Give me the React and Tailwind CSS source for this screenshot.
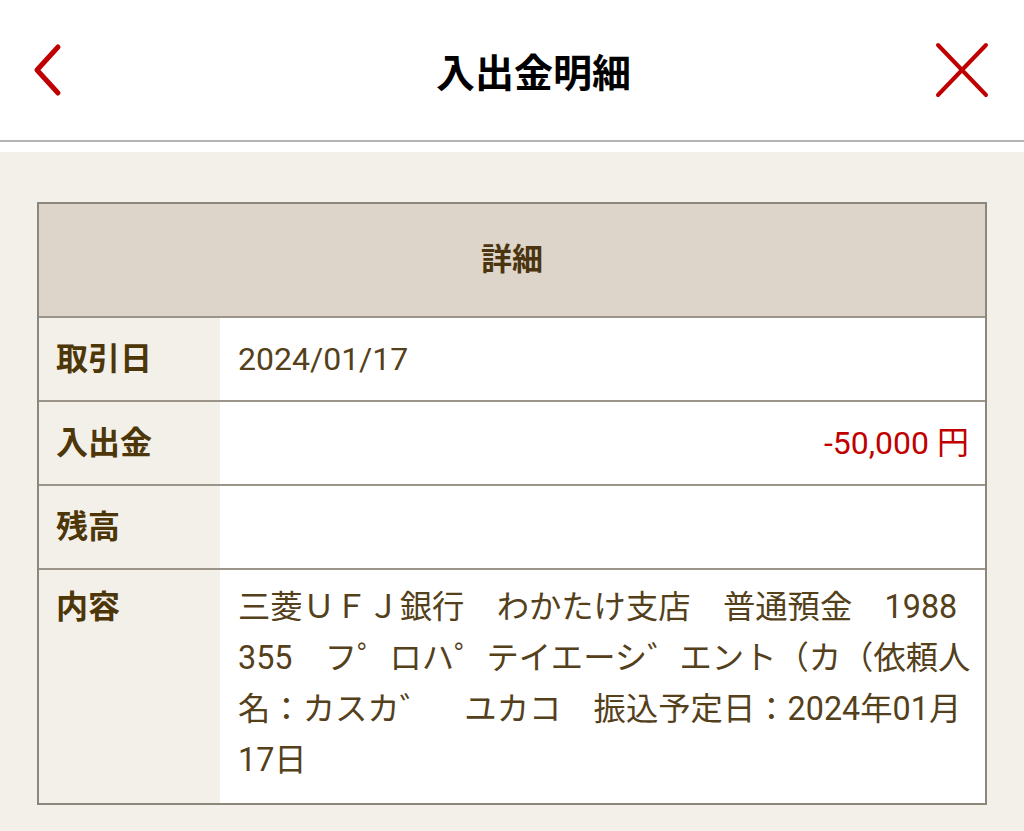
const rows = [
  { label: "取引日", value: "2024/01/17" },
  { label: "入出金", value: "-50,000 円", amount: true },
  { label: "残高", value: "" },
];

const content =
  "三菱ＵＦＪ銀行　わかたけ支店　普通預金　1988355　フ゜ロハ゜テイエーシ゛エント（カ（依頼人名：カスカ゛　ユカコ　振込予定日：2024年01月17日";

function BackIcon() {
  return (
    <svg width="34" height="54" viewBox="0 0 34 54" fill="none">
      <path
        d="M28 4 L7 27 L28 50"
        stroke="#c00000"
        strokeWidth="5"
        strokeLinecap="round"
        strokeLinejoin="round"
      />
    </svg>
  );
}

function CloseIcon() {
  return (
    <svg width="54" height="56" viewBox="0 0 54 56" fill="none">
      <path
        d="M3 3 L51 53 M51 3 L3 53"
        stroke="#c00000"
        strokeWidth="4"
        strokeLinecap="round"
      />
    </svg>
  );
}

export default function App() {
  return (
    <div
      className="min-h-[831px] w-full bg-[#f3f0ea]"
      style={{ fontFamily: "Roboto, 'Noto Sans CJK JP', sans-serif" }}
    >
      <header className="flex h-[142px] items-center border-b-2 border-[#b4b4b4] bg-white pl-[30px] pr-[35px]">
        <BackIcon />
        <h1 className="mt-[9px] flex-1 pl-[68px] text-center text-[39px] font-bold text-black">
          入出金明細
        </h1>
        <CloseIcon />
      </header>
      <div className="h-[10px] bg-white" />

      <main className="px-[37px] pt-[50px] pb-[24px]">
        <div className="border-2 border-[#8c877d]">
          <div className="flex h-[112px] items-center justify-center bg-[#ddd5c9] text-[31px] font-bold text-[#4a3510]">
            詳細
          </div>

          {rows.map((row) => (
            <div
              key={row.label}
              className="flex h-[84px] border-t-2 border-[#9a948a]"
            >
              <div className="flex w-[181px] items-center bg-[#f3f0ea] pl-[17px] text-[32px] font-bold text-[#4d3608]">
                {row.label}
              </div>
              <div
                className={
                  row.amount
                    ? "flex flex-1 items-center justify-end bg-white pr-[16px] text-[32px] text-[#c00000]"
                    : "flex flex-1 items-center bg-white pl-[18px] text-[32px] text-[#54401a]"
                }
              >
                {row.value}
              </div>
            </div>
          ))}

          <div className="flex border-t-2 border-[#9a948a]">
            <div className="w-[181px] bg-[#f3f0ea] pt-[12px] pl-[17px] text-[32px] leading-[51px] font-bold text-[#4d3608]">
              内容
            </div>
            <div className="flex-1 bg-white pt-[12px] pr-[12px] pb-[17px] pl-[18px] text-[32.35px] leading-[51px] break-all text-[#54401a]">
              {content}
            </div>
          </div>
        </div>
      </main>
    </div>
  );
}
